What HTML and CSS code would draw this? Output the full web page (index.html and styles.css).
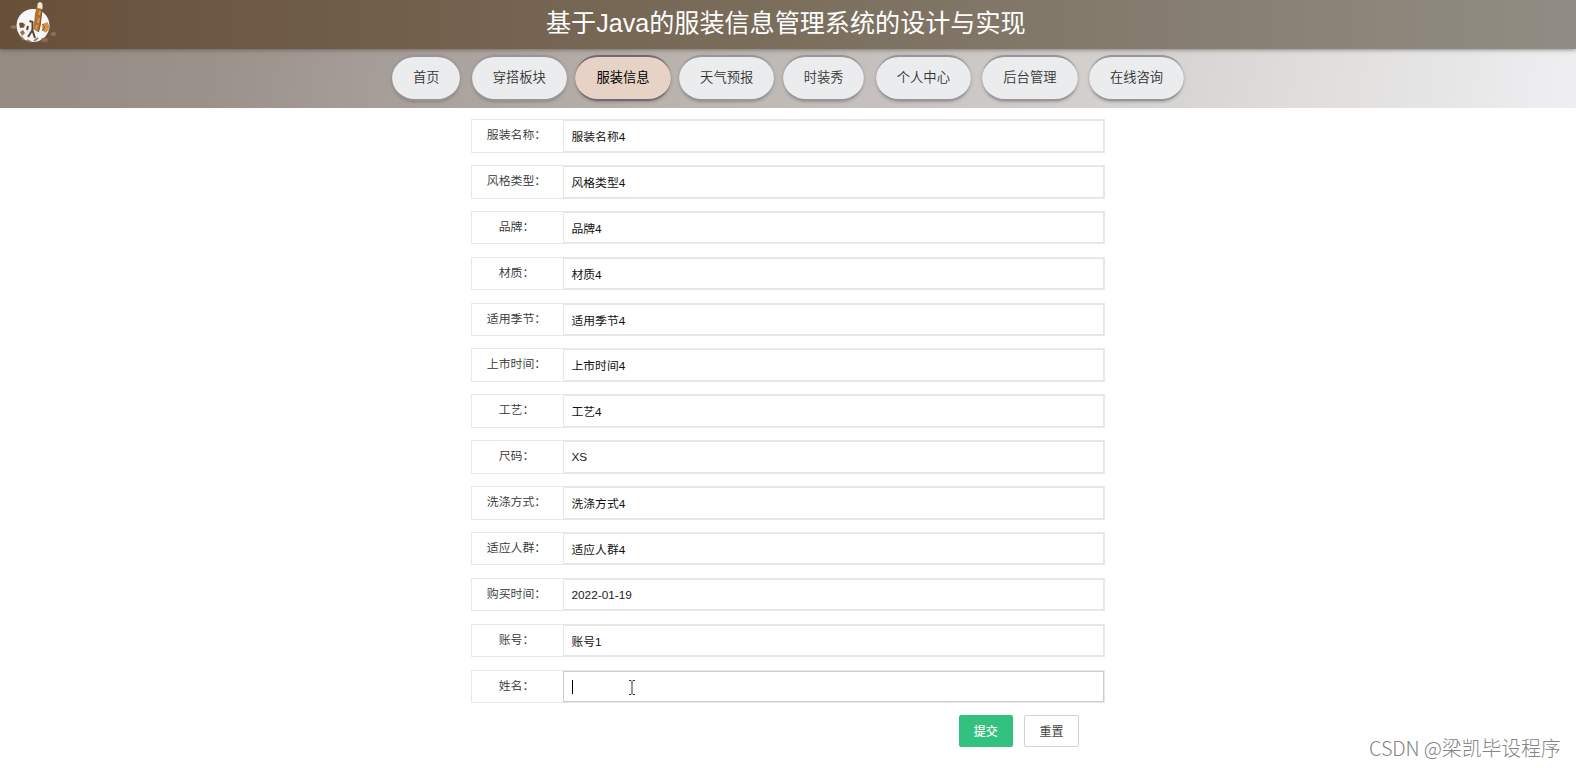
FILE: index.html
```html
<!DOCTYPE html>
<html lang="zh-CN">
<head>
<meta charset="utf-8">
<title>基于Java的服装信息管理系统的设计与实现</title>
<link rel="stylesheet" href="styles.css">
</head>
<body>
<header class="header">
  <svg class="logo" viewBox="0 0 54 50" width="54" height="50">
    <circle cx="27" cy="25.500" r="16.500" fill="#f4f6f7"/>
    <ellipse cx="7.500" cy="27" rx="3" ry="1.800" fill="#8d7460"/>
    <ellipse cx="47.500" cy="34" rx="3" ry="2" fill="#8d6c50"/>
    <ellipse cx="38.500" cy="40" rx="3.500" ry="2.300" fill="#8b6a4c"/>
    <path d="M31 6 36.500 7 34 26 32 32 27.500 29 29 14Z" fill="#b0702f"/>
    <path d="M31.500 4q2.500-4 5 0v5l-5-1z" fill="#f2e6d6"/>
    <path d="M34 11l-1 4M33 18l-1 5M31 25l-1 4" stroke="#d99a55" stroke-width="2"/>
    <path d="M36 10l-2 16-1.500 6" stroke="#7c4a20" fill="none"/>
    <path d="m36.500 24 5-2 2.500 6-4 4.500-4-2z" fill="#d8914a"/>
    <path d="m36.500 24 2 3-2 4" stroke="#8f5a2c" fill="none"/>
    <path d="M13 23.500q3-2.500 6 1l-1 3-4 .5z" fill="#7b5030"/>
    <path d="M14 32l3-2 2 3-3 3z" fill="#a86d3b"/>
    <path d="m23.500 21 3 1v8l-4.500 7M26 29l3 9M22 26l-1 4" stroke="#5c4433" stroke-width="2" fill="none"/>
    <path d="m15 37 3 3m3 0 4 2m3-1 4-3" stroke="#9b7b5d" stroke-width="1.800"/>
  </svg>
  <h1 class="title">基于Java的服装信息管理系统的设计与实现</h1>
</header>
<nav class="nav">
  <a class="pill w-short">首页</a>
  <a class="pill gap-wide">穿搭板块</a>
  <a class="pill active">服装信息</a>
  <a class="pill">天气预报</a>
  <a class="pill w-mid">时装秀</a>
  <a class="pill gap-wide">个人中心</a>
  <a class="pill gap-wide">后台管理</a>
  <a class="pill gap-wide">在线咨询</a>
</nav>
<main class="form">
  <div class="row"><label class="label">服装名称：</label><div class="field">服装名称4</div></div>
  <div class="row"><label class="label">风格类型：</label><div class="field">风格类型4</div></div>
  <div class="row"><label class="label">品牌：</label><div class="field">品牌4</div></div>
  <div class="row"><label class="label">材质：</label><div class="field">材质4</div></div>
  <div class="row"><label class="label">适用季节：</label><div class="field">适用季节4</div></div>
  <div class="row"><label class="label">上市时间：</label><div class="field">上市时间4</div></div>
  <div class="row"><label class="label">工艺：</label><div class="field">工艺4</div></div>
  <div class="row"><label class="label">尺码：</label><div class="field latin">XS</div></div>
  <div class="row"><label class="label">洗涤方式：</label><div class="field">洗涤方式4</div></div>
  <div class="row"><label class="label">适应人群：</label><div class="field">适应人群4</div></div>
  <div class="row"><label class="label">购买时间：</label><div class="field latin">2022-01-19</div></div>
  <div class="row"><label class="label">账号：</label><div class="field">账号1</div></div>
  <div class="row"><label class="label">姓名：</label><div class="field focused"><span class="caret"></span></div></div>
  <div class="actions"><button class="btn submit">提交</button><button class="btn reset">重置</button></div>
</main>
<svg class="pointer" viewBox="0 0 8 15" width="8" height="15"><path d="M1 .5h2l1 1 1-1h2M4 1.500v12M1 14.500h2l1-1 1 1h2" fill="none" stroke="#333"/></svg>
<div class="watermark">CSDN @梁凯毕设程序</div>
</body>
</html>
```
FILE: styles.css
```css
* { box-sizing: border-box; }
body {
  margin: 0;
  width: 1576px;
  height: 768px;
  overflow: hidden;
  position: relative;
  background: #fff;
  color: #333;
  font-family: "Liberation Sans", "Noto Sans CJK SC", sans-serif;
}
.header {
  position: relative;
  z-index: 1;
  height: 49px;
  background: linear-gradient(90deg, #67503a 0%, #7b6e5d 50%, #918d84 100%);
  box-shadow: 0 1px 4px rgba(60, 50, 45, .5);
}
.logo { position: absolute; left: 6px; top: 0; }
.title {
  margin: 0;
  padding-left: 546px;
  font-size: 25.1px;
  line-height: 47px;
  font-weight: 400;
  color: #fff;
  white-space: nowrap;
}
.nav {
  display: flex;
  gap: 8.400px;
  height: 58.500px;
  padding: 6.400px 0 0 392px;
  background: linear-gradient(100deg, #958b83 0%, #9b928c 14%, #b5ada8 38%, #cac6c3 60%, #dfdedc 83%, #efeef1 100%);
}
.pill {
  width: 95.300px;
  height: 46px;
  border: solid #98969a;
  border-width: 2px 0;
  border-radius: 24px;
  background: #eaeced;
  box-shadow: 0 1px 3px rgba(70, 65, 70, .35);
  font-size: 13.300px;
  font-weight: 350;
  line-height: 41.500px;
  text-align: center;
  white-space: nowrap;
}
.w-short { width: 68.400px; }
.w-mid { width: 81.700px; }
.gap-wide { margin-left: 2.900px; }
.active { background: #e6d3c6; border-color: #756875; color: #000; font-weight: 400; }
.form {
  width: 634px;
  margin: 11.700px 0 0 471px;
}
.row {
  display: flex;
  height: 33.500px;
  margin-bottom: 12.370px;
  border: 1px solid #e8e8e8;
}
.label {
  width: 91px;
  padding-left: 14px;
  padding-right: 16px;
  text-align: center;
  font-size: 11.900px;
  font-weight: 350;
  line-height: 31px;
  white-space: nowrap;
}
.field {
  flex: 1;
  padding-left: 7.500px;
  border: 1px solid #e6e6e6;
  color: #111;
  font-size: 11.800px;
  line-height: 32px;
}
.latin { color: #222; line-height: 31px; }
.focused { border-color: #ccc; }
.caret { display: block; width: 1px; height: 14px; margin-top: 8px; background: #000; }
.actions {
  display: flex;
  gap: 11.500px;
  padding-left: 488px;
}
.btn {
  width: 55px;
  height: 32px;
  padding: 0 0 1px;
  border: 1px solid #d2d2d2;
  border-radius: 2px;
  background: #fff;
  color: #444;
  font: 400 12px "Liberation Sans", "Noto Sans CJK SC", sans-serif;
}
.submit { width: 53.500px; border-color: #33c17f; background: #33c17f; color: #fff; font-weight: 500; }
.pointer { position: absolute; left: 628px; top: 680px; }
.watermark {
  position: absolute;
  left: 1369px;
  top: 734px;
  color: #858585;
  font-family: "Noto Sans CJK SC", sans-serif;
  font-size: 19.900px;
  font-weight: 300;
  line-height: 28px;
  letter-spacing: -.1px;
  white-space: nowrap;
}
```
